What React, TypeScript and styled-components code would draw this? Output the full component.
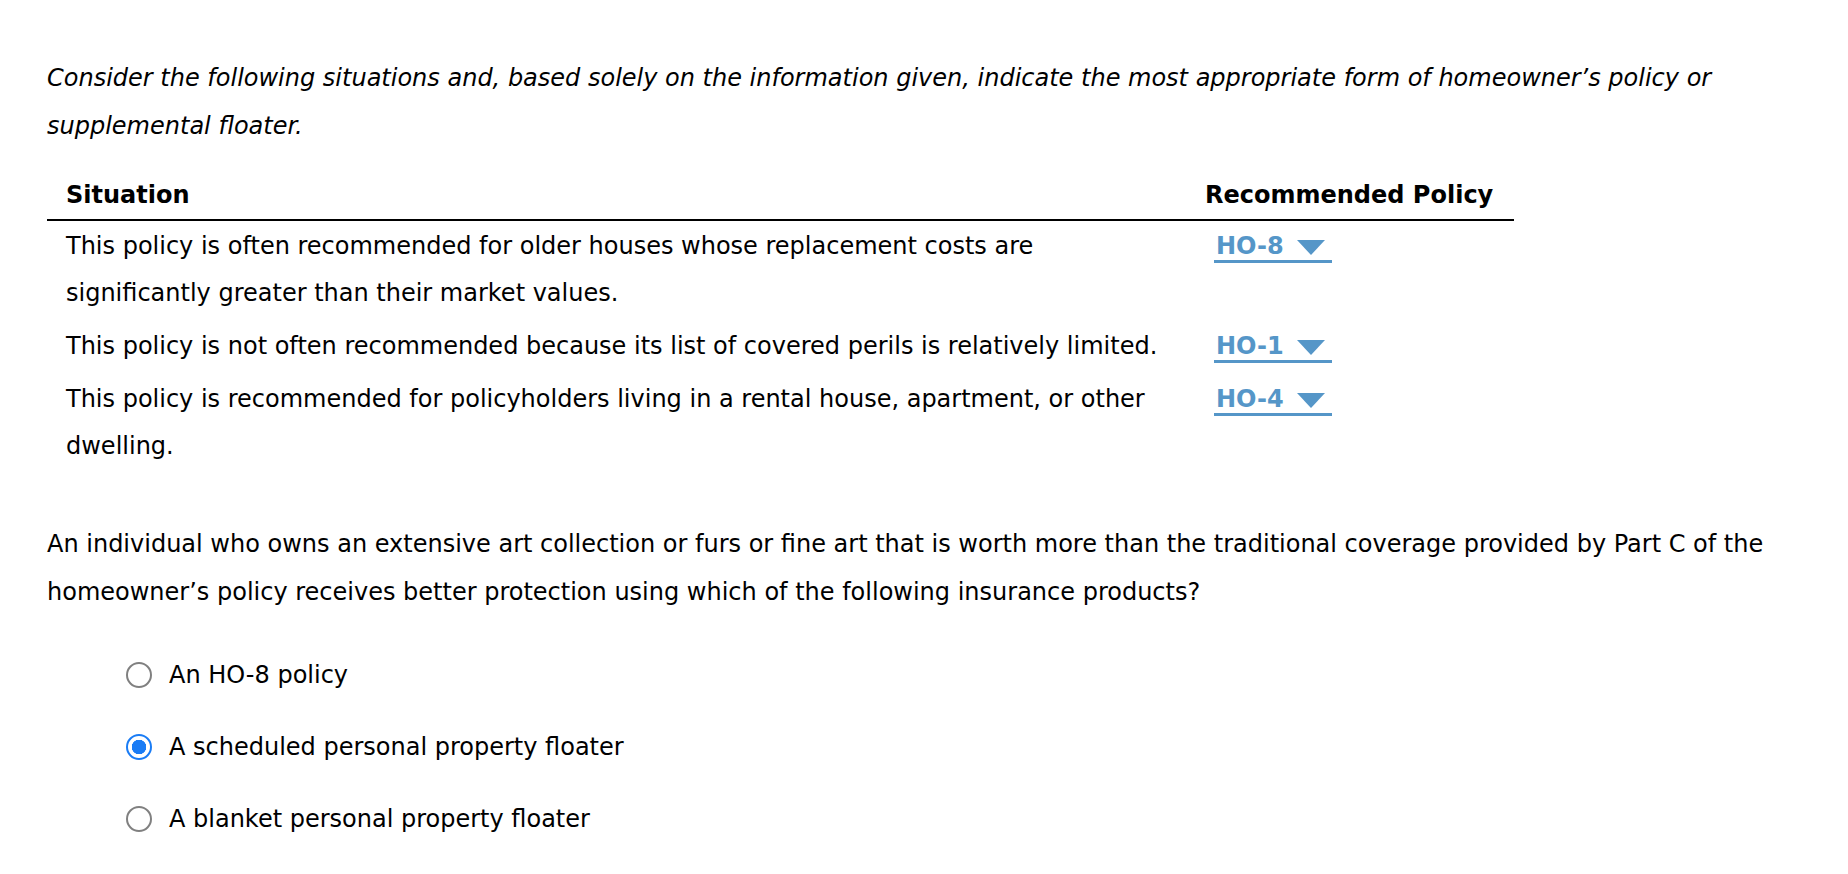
import React from "react";
import styled, { createGlobalStyle } from "styled-components";

const Global = createGlobalStyle`
  html, body { margin: 0; padding: 0; background: #ffffff; }
  body {
    font-family: Verdana, "DejaVu Sans", sans-serif;
    color: #000000;
    font-size: 24px;
  }
`;

const Page = styled.div`
  padding: 54px 38px 40px 47px;
  width: 1848px;
  box-sizing: border-box;
`;

const Intro = styled.p`
  margin: 0;
  font-style: italic;
  line-height: 48px;
`;

const Table = styled.div`
  margin-top: 22px;
  width: 1467px;
  display: grid;
  grid-template-columns: 1148px 319px;
`;

const HeadCell = styled.div<{ $inset?: number }>`
  font-weight: bold;
  line-height: 47px;
  padding: 0 19px 0 ${(p) => p.$inset ?? 19}px;
  border-bottom: 2px solid #000;
`;

const Cell = styled.div`
  line-height: 47px;
  padding: 2px 19px 4px 19px;
  white-space: nowrap;
`;

const Dropdown = styled.span`
  display: inline-flex;
  align-items: center;
  justify-content: space-between;
  width: 118px;
  box-sizing: border-box;
  padding: 0 7px 0 2px;
  color: #5596c8;
  font-weight: bold;
  line-height: 28px;
  border-bottom: 3px solid #5596c8;
  vertical-align: baseline;
`;

const Caret = styled.span`
  width: 0;
  height: 0;
  border-left: 14px solid transparent;
  border-right: 14px solid transparent;
  border-top: 15px solid #5596c8;
  margin-top: 2px;
`;

const Question = styled.p`
  margin: 46px 0 0 0;
  line-height: 48px;
`;

const Options = styled.div`
  margin-top: 23px;
  padding-left: 79px;
  display: flex;
  flex-direction: column;
`;

const Option = styled.label`
  display: flex;
  align-items: center;
  gap: 17px;
  height: 72px;
  line-height: 48px;
`;

const Radio = styled.span<{ $checked?: boolean }>`
  width: 26px;
  height: 26px;
  box-sizing: border-box;
  border-radius: 50%;
  flex: none;
  border: 2px solid ${(p) => (p.$checked ? "#1a7cf5" : "#808080")};
  background: ${(p) =>
    p.$checked
      ? "radial-gradient(circle, #1a7cf5 0 7px, #ffffff 7.5px)"
      : "#ffffff"};
`;

const rows: { text: React.ReactNode; value: string }[] = [
  {
    text: (
      <>
        This policy is often recommended for older houses whose replacement costs are
        <br />
        significantly greater than their market values.
      </>
    ),
    value: "HO-8",
  },
  {
    text: "This policy is not often recommended because its list of covered perils is relatively limited.",
    value: "HO-1",
  },
  {
    text: (
      <>
        This policy is recommended for policyholders living in a rental house, apartment, or other
        <br />
        dwelling.
      </>
    ),
    value: "HO-4",
  },
];

const options = [
  { label: "An HO-8 policy", checked: false },
  { label: "A scheduled personal property floater", checked: true },
  { label: "A blanket personal property floater", checked: false },
];

export default function App() {
  return (
    <>
      <Global />
      <Page>
        <Intro>
          Consider the following situations and, based solely on the information given, indicate the most
          appropriate form of homeowner’s policy or supplemental floater.
        </Intro>
        <Table>
          <HeadCell>Situation</HeadCell>
          <HeadCell $inset={10}>Recommended Policy</HeadCell>
          {rows.map((r) => (
            <React.Fragment key={r.value}>
              <Cell>{r.text}</Cell>
              <Cell>
                <Dropdown>
                  {r.value}
                  <Caret />
                </Dropdown>
              </Cell>
            </React.Fragment>
          ))}
        </Table>
        <Question>
          An individual who owns an extensive art collection or furs or fine art that is worth more than the
          traditional coverage provided by Part C of the homeowner’s policy receives better protection using
          which of the following insurance products?
        </Question>
        <Options>
          {options.map((o) => (
            <Option key={o.label}>
              <Radio $checked={o.checked} />
              {o.label}
            </Option>
          ))}
        </Options>
      </Page>
    </>
  );
}
